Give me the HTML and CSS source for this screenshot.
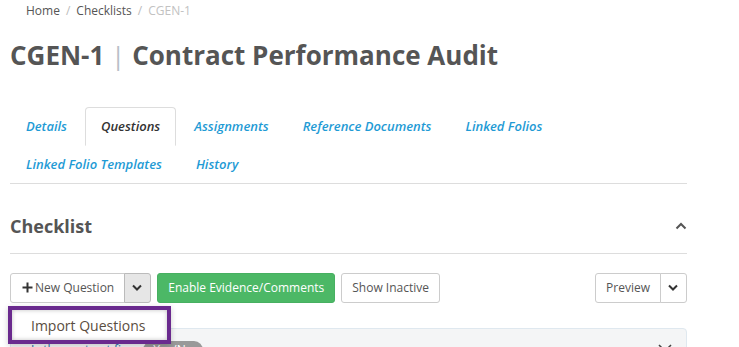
FILE: index.html
```html
<!DOCTYPE html>
<html lang="en">
<head>
	<meta charset="UTF-8">
	<title>CGEN-1 | Contract Performance Audit</title>
	<link rel="stylesheet" href="styles.css">
</head>
<body>
	<div id="page">
		<ol class="crumbs">
			<li><a href="#">Home</a></li>
			<li><a href="#">Checklists</a></li>
			<li class="current">CGEN-1</li>
		</ol>

		<h1 class="title">CGEN-1 <span class="sep">|</span> Contract Performance Audit</h1>

		<ul class="tabs">
			<li><a href="#">Details</a></li>
			<li class="active"><a href="#">Questions</a></li>
			<li><a href="#">Assignments</a></li>
			<li><a href="#">Reference Documents</a></li>
			<li><a href="#">Linked Folios</a></li>
			<li><a href="#">Linked Folio Templates</a></li>
			<li><a href="#">History</a></li>
		</ul>

		<div class="box-head">
			<h2>Checklist</h2>
			<svg class="caret-up" width="12" height="8" viewBox="0 0 12 8"><path d="M1.5 6.5 L6 2 L10.5 6.5" fill="none" stroke="#555" stroke-width="2"/></svg>
		</div>

		<div class="toolbar">
			<div class="btn-group drop">
				<button class="btn">
					<svg class="plus" width="11" height="11" viewBox="0 0 11 11"><path d="M5.5 0.5 V10.5 M0.5 5.5 H10.5" stroke="#333" stroke-width="2"/></svg>
					New Question
				</button>
				<button class="btn caret-btn pressed">
					<svg width="10" height="7" viewBox="0 0 10 7"><path d="M1 1.5 L5 5.5 L9 1.5" fill="none" stroke="#333" stroke-width="2"/></svg>
				</button>
				<ul class="menu">
					<li>Import Questions</li>
				</ul>
			</div>
			<button class="btn btn-green">Enable Evidence/Comments</button>
			<button class="btn">Show Inactive</button>
			<div class="btn-group right">
				<button class="btn">Preview</button>
				<button class="btn caret-btn">
					<svg width="10" height="7" viewBox="0 0 10 7"><path d="M1 1.5 L5 5.5 L9 1.5" fill="none" stroke="#333" stroke-width="2"/></svg>
				</button>
			</div>
		</div>

		<div class="question">
			<span class="q-text">Is the contract fine</span>
			<span class="q-badge">Yes/No</span>
			<svg class="q-chev" width="14" height="8" viewBox="0 0 14 8"><path d="M1 1 L7 7 L13 1" fill="none" stroke="#444" stroke-width="1.6"/></svg>
		</div>
	</div>
</body>
</html>
```

FILE: styles.css
```css
* {margin: 0; padding: 0; box-sizing: border-box;}
body {font-family: "Open Sans", "Liberation Sans", sans-serif; font-size: 13px; color: #555; background: #fff;}
a {text-decoration: none;}
#page {width: 687px; padding-left: 10px;}

.crumbs {list-style: none; display: flex; padding: 2px 0 0 16px; line-height: 18px; font-size: 12px;}
.crumbs li a {color: #555;}
.crumbs li + li:before {content: "/"; color: #bbb; padding: 0 6px;}
.crumbs .current {color: #c2c2c2;}

.title {font-size: 26px; font-weight: 700; line-height: 28.6px; color: #555; margin-top: 21px;}
.title .sep {font-weight: 400; color: #b8c0c8;}

.tabs {list-style: none; display: flex; flex-wrap: wrap; margin-top: 37px; border-bottom: 1px solid #ddd;}
.tabs li {margin-bottom: -1px;}
.tabs li a {display: block; padding: 9px 15px; margin-right: 2px; line-height: 19px; border: 1px solid transparent; border-radius: 4px 4px 0 0;
	color: #1f9bd5; font-style: italic; font-weight: 600; font-size: 13px;}
.tabs li.active a {color: #333; border-color: #ddd; border-bottom-color: #fff; background: #fff;}

.box-head {display: flex; align-items: center; justify-content: space-between; padding: 30px 0 15px; border-bottom: 1px solid #ddd;}
.box-head h2 {font-size: 18px; line-height: 24px; font-weight: 700; color: #555;}

.toolbar {display: flex; gap: 6px; margin-top: 19px;}
.btn {font-family: inherit; font-size: 12px; line-height: 18px; padding: 5px 10px; border: 1px solid #ccc; border-radius: 3px; background: #fff; color: #555; cursor: pointer; display: flex; align-items: center;}
.btn-group {display: flex; position: relative;}
.btn-group .btn:first-child {border-radius: 3px 0 0 3px;}
.btn-group .btn + .btn {border-radius: 0 3px 3px 0; margin-left: -1px;}
.btn-group.right {margin-left: auto;}
.drop > .btn:first-child {padding: 5px 10px 5px 11px;}
.caret-btn {padding: 5px 8px 5px 7px;}
.caret-btn.pressed {background: #e6e6e6; border-color: #bbb;}
.plus {margin-right: 2px;}
.btn-green {background: #4cb866; border-color: #47b061; color: #fff; padding: 5px 10px;}

.menu {list-style: none; position: absolute; top: 33px; left: -2px; width: 163px; background: #fff; border: 4px solid #6a2a8e;
	box-shadow: inset 0 0 4px rgba(0,0,0,.25), 0 2px 6px rgba(0,0,0,.2); z-index: 5; padding: 6px 0 4px;}
.menu li {padding: 0 19px; font-size: 14px; line-height: 20px; color: #5a4d40;}

.question {margin-top: 25px; height: 40px; background: #f4f5f6; border: 1px solid #dfe8ef; border-radius: 4px;
	display: flex; align-items: flex-start; padding: 12px 14px 0 20px;}
.q-text {color: #1f6fa8; font-size: 12px; line-height: 18px;}
.q-badge {background: #999; color: #fff; border-radius: 9px; padding: 0 10px; margin-left: 8px; font-size: 12px; line-height: 18px;}
.q-chev {margin-left: auto; margin-right: 0; margin-top: 3px;}
```
